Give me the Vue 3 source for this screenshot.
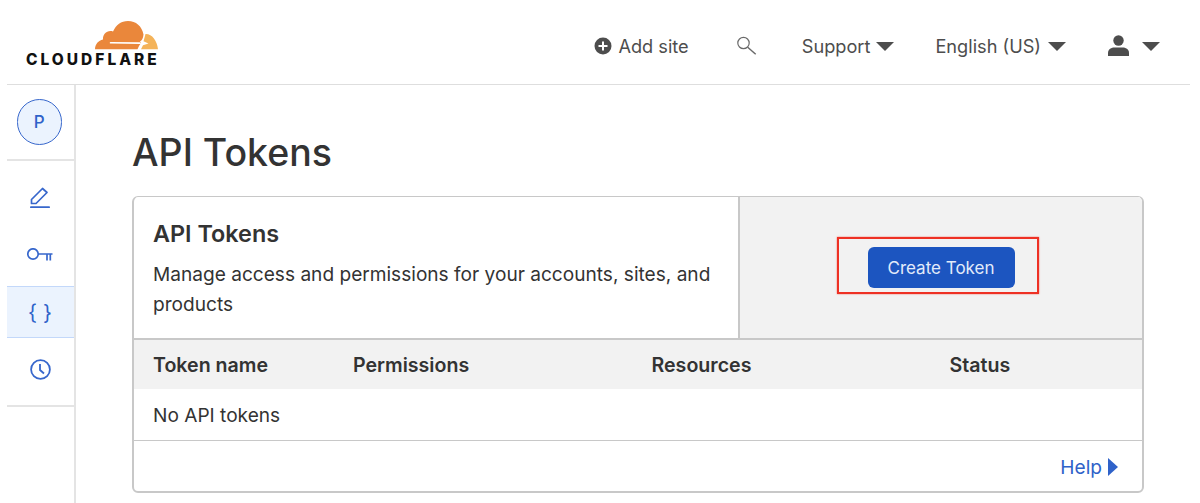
<script setup>
const columns = ['Token name', 'Permissions', 'Resources', 'Status']
</script>

<template>
  <div class="page">
    <header class="topbar">
      <div class="logo">
        <svg class="cloud" width="68" height="30" viewBox="92 20 68 30" aria-hidden="true">
          <path fill="#ea873b" d="M95 49.200C95 44.200 98.500 40.400 103 39.500 102.500 34 107.500 29.500 113 31.500 116 25 121 21 128 21c8 0 14 5.200 15.500 13.500-.3 3.500-1.500 6-3.500 7l1 1.500-2 3-1.500 3.200z" />
          <path fill="#fff" d="M110.500 41.900l29.500.3 1.500 1.300-1.500 .5-29.500-.4c-1-.1-1-1.700 0-1.700z" />
          <path fill="#f4b359" d="M145.500 34c6.500-.3 11.500 6.500 12.500 15.200h-17l2-4 5.500-1.700-5-2.300 1-3.500z" />
        </svg>
        <span class="wordmark">CLOUDFLARE</span>
      </div>
      <nav class="topnav">
        <a class="nav-item add-site">
          <svg width="18" height="18" viewBox="0 0 18 18" aria-hidden="true">
            <circle cx="9" cy="9" r="8.500" fill="#4d4d4d" />
            <path d="M9 4.500v9M4.500 9h9" stroke="#fff" stroke-width="2" />
          </svg>
          Add site
        </a>
        <svg class="search" width="20" height="20" viewBox="0 0 20 20" aria-hidden="true">
          <circle cx="6.500" cy="7" r="5.700" fill="none" stroke="#6a6a6a" stroke-width="1.200" />
          <path d="M10.700 11.200l8 7" stroke="#6a6a6a" stroke-width="1.500" />
        </svg>
        <a class="nav-item support">Support <i class="caret"></i></a>
        <a class="nav-item language">English (US) <i class="caret"></i></a>
        <a class="nav-item user">
          <svg width="21" height="22" viewBox="0 0 21 22" aria-hidden="true">
            <circle cx="10.500" cy="5.500" r="5.200" fill="#4d4d4d" />
            <path d="M0 21v-3c0-4 3.500-5.500 6.500-5.500h8c3 0 6.500 1.500 6.500 5.500v3z" fill="#4d4d4d" />
          </svg>
          <i class="caret"></i>
        </a>
      </nav>
    </header>

    <div class="body">
      <aside class="sidebar">
        <div class="avatar-wrap"><div class="avatar">P</div></div>
        <ul class="side-items">
          <li class="side-item">
            <svg width="20" height="21" viewBox="0 0 20 21" fill="none" stroke="#3767cc" stroke-width="1.700" aria-hidden="true">
              <path d="M1.500 16.500v-4L12.500 1.500 17 5.500 6 16.500z" stroke-linejoin="round" />
              <path d="M.8 20.200h18.400" stroke-linecap="round" />
            </svg>
          </li>
          <li class="side-item">
            <svg width="26" height="13" viewBox="0 0 26 13" fill="none" stroke="#3767cc" stroke-width="1.700" aria-hidden="true">
              <circle cx="6" cy="6" r="5.200" />
              <path d="M11 6h14.500M20 6v6.500M23.300 6v6.500" />
            </svg>
          </li>
          <li class="side-item active">
            <span class="braces">{ }</span>
          </li>
          <li class="side-item">
            <svg width="21" height="21" viewBox="0 0 21 21" fill="none" stroke="#3767cc" stroke-width="1.800" aria-hidden="true">
              <circle cx="10.500" cy="10.500" r="9.400" />
              <path d="M10 5v6l4 3.500" />
            </svg>
          </li>
        </ul>
      </aside>

      <main class="main">
        <h1 class="title">API Tokens</h1>
        <section class="card">
          <div class="intro">
            <div class="intro-text">
              <h2>API Tokens</h2>
              <p>Manage access and permissions for your accounts, sites, and products</p>
            </div>
            <div class="intro-action">
              <div class="highlight">
                <button class="create">Create Token</button>
              </div>
            </div>
          </div>
          <div class="table-head">
            <span v-for="c in columns" :key="c">{{ c }}</span>
          </div>
          <div class="empty">No API tokens</div>
          <div class="card-foot">
            <a class="help">Help <i class="help-arrow"></i></a>
          </div>
        </section>
      </main>
    </div>
  </div>
</template>

<style>
html, body { background: #fff; overflow: hidden; }
</style>

<style scoped>
.page {
  width: 1200px;
  height: 503px;
  box-sizing: border-box;
  padding: 0 10px 0 7px;
  font-family: Inter, "Liberation Sans", sans-serif;
  color: #333;
  overflow: hidden;
}
.topbar {
  height: 85px;
  box-sizing: border-box;
  border-bottom: 1px solid #dedede;
  display: flex;
  align-items: flex-start;
  justify-content: space-between;
}
.logo {
  width: 152px;
  height: 84px;
  margin-left: 19px;
  display: flex;
  flex-direction: column;
}
.cloud { margin: 20px 0 0 66px; display: block; flex: none; }
.wordmark {
  font-family: Inter, sans-serif;
  font-weight: 800;
  font-size: 15.500px;
  line-height: 16px;
  letter-spacing: 3px;
  color: #111;
  white-space: nowrap;
  margin-top: 2px;
}
.topnav {
  display: flex;
  align-items: center;
  height: 92px;
  padding-right: 30px;
  font-size: 18.200px;
  color: #4d4d4d;
}
.nav-item { display: flex; align-items: center; white-space: nowrap; }
.add-site { gap: 6px; }
.search { margin: 0 45px 1px 48px; }
.support { gap: 6px; margin-right: 41px; }
.language { gap: 7px; margin-right: 42px; }
.user { gap: 13px; }
.caret {
  display: block;
  width: 0;
  height: 0;
  border-left: 9px solid transparent;
  border-right: 9px solid transparent;
  border-top: 9px solid #4d4d4d;
}
.body { display: flex; height: 418px; }
.sidebar {
  width: 69px;
  box-sizing: border-box;
  border-right: 2px solid #e4e4e4;
  flex: none;
}
.avatar-wrap {
  height: 76px;
  box-sizing: border-box;
  border-bottom: 2px solid #e4e4e4;
  padding: 14px 0 0 9.500px;
}
.avatar {
  width: 45.500px;
  height: 45.500px;
  box-sizing: border-box;
  border-radius: 50%;
  border: 1.500px solid #3767cc;
  background: #ebf3fe;
  color: #2f62c9;
  font-size: 17px;
  font-weight: 500;
  display: flex;
  align-items: center;
  justify-content: center;
}
.side-items {
  list-style: none;
  margin: 0;
  padding: 10px 0 10px;
  height: 246px;
  box-sizing: border-box;
  border-bottom: 2px solid #e4e4e4;
  display: grid;
  grid-auto-rows: 52px;
  row-gap: 5.500px;
}
.side-item { display: flex; align-items: center; justify-content: center; padding-right: 1px; }
.side-item.active {
  background: #ebf3fe;
  border-top: 1px solid #c3d8fa;
  border-bottom: 1px solid #c3d8fa;
}
.braces {
  color: #2f62c9;
  font-size: 21px;
  font-weight: 400;
}
.main { flex: 1; padding-left: 56px; min-width: 0; }
.title {
  margin: 0;
  height: 111px;
  box-sizing: border-box;
  padding-top: 42px;
  font-size: 37.500px;
  line-height: 52px;
  font-weight: 500;
  color: #333;
}
.card {
  width: 1012px;
  height: 297px;
  box-sizing: border-box;
  border: 2px solid #c8c8c8;
  border-top-width: 1px;
  border-radius: 6px;
  overflow: hidden;
  font-size: 19.100px;
  display: flex;
  flex-direction: column;
}
.intro { display: flex; height: 141px; flex: none; border-bottom: 2px solid #c8c8c8; }
.intro-text { width: 604px; padding: 21px 0 0 19px; box-sizing: border-box; flex: none; }
.intro-text h2 { margin: 0 0 9px; font-size: 23.400px; line-height: 32px; font-weight: 600; }
.intro-text p { margin: 0; line-height: 30px; width: 570px; }
.intro-action {
  flex: 1;
  background: #f2f2f2;
  border-left: 2px solid #c8c8c8;
  display: flex;
  align-items: flex-start;
  justify-content: center;
  padding-top: 40px;
}
.highlight {
  width: 202px;
  height: 57px;
  box-sizing: border-box;
  border: 2px solid #ee3124;
  box-shadow: 0 0 1.500px #f3665c;
  padding: 8px 22px 6px 29px;
  margin-left: -7px;
}
.create {
  display: block;
  width: 147px;
  height: 41px;
  padding: 1px 0 0;
  border: 0;
  border-radius: 6px;
  background: #1c55c0;
  color: #e2ebfa;
  font: 400 17px Inter, sans-serif;
}
.table-head {
  height: 49px;
  flex: none;
  background: #f2f2f2;
  display: grid;
  grid-template-columns: 200px 298.500px 298px 1fr;
  align-items: center;
  padding-left: 19px;
  font-size: 19.600px;
  font-weight: 600;
}
.empty {
  height: 51px;
  flex: none;
  padding-left: 19px;
  display: flex;
  align-items: center;
  border-bottom: 1px solid #c8c8c8;
}
.card-foot {
  flex: 1;
  display: flex;
  justify-content: flex-end;
  padding: 13px 24px 0 0;
}
.help { display: flex; align-items: center; gap: 6px; height: 26px; color: #2f62c9; line-height: 26px; }
.help-arrow {
  display: block;
  width: 0;
  height: 0;
  border-top: 9px solid transparent;
  border-bottom: 9px solid transparent;
  border-left: 10px solid #2f62c9;
}
</style>
